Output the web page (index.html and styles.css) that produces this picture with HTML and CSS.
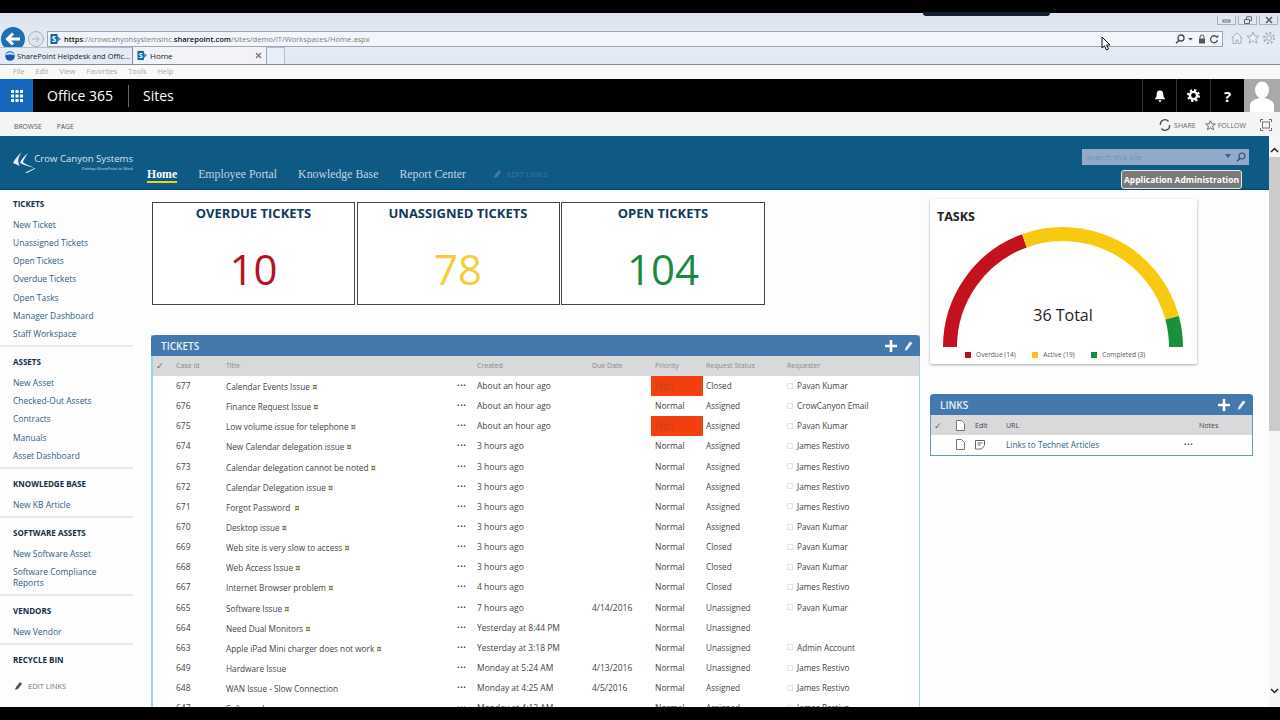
FILE: index.html
```html
<!DOCTYPE html>
<html lang="en">
<head>
<meta charset="utf-8">
<title>Home</title>
<link rel="stylesheet" href="styles.css">
</head>
<body>
<div class="app">
  <div class="blackbar"><div class="notch"></div></div>

  <div class="chrome">
    <div class="window-btns">
      <span class="win-btn"><svg width="10" height="8" viewBox="0 0 10 8"><rect x="1" y="4" width="7" height="2" fill="none" stroke="#6a7480"/></svg></span>
      <span class="win-btn"><svg width="10" height="8" viewBox="0 0 10 8"><path d="M1.5 3.5h5v4h-5zM3.5 3V.8h5v4H7" fill="none" stroke="#5a6470"/></svg></span>
      <span class="win-btn"><svg width="10" height="8" viewBox="0 0 10 8"><path d="M2 1l6 6M8 1L2 7" stroke="#5a6470" stroke-width="1.6"/></svg></span>
    </div>
    <div class="nav-row">
      <span class="back"><svg width="24" height="24" viewBox="0 0 24 24"><circle cx="12" cy="12" r="12" fill="#1f6db2"/><path d="M19 12H7M12 6.5L6.5 12l5.500 5.500" fill="none" stroke="#fff" stroke-width="3"/></svg></span>
      <span class="forward"><svg width="16" height="16" viewBox="0 0 16 16"><circle cx="8" cy="8" r="7.500" fill="#dfe5ee" stroke="#a9b2bf"/><path d="M4 8h7M8 5l3 3-3 3" fill="none" stroke="#a9b2bf"/></svg></span>
      <div class="address">
        <svg class="s-logo" width="12" height="12" viewBox="0 0 12 12"><path d="M6 2l5 4-5 4z" fill="#3f8fc4"/><rect x="0.500" y="1" width="7" height="10" fill="#0f6aa8"/><text x="1.800" y="9" class="s-letter">S</text></svg>
        <span class="url"><b>https</b>://crowcanyonsystemsinc.<b>sharepoint.com</b>/sites/demo/IT/Workspaces/Home.aspx</span>
        <span class="addr-tools">
          <svg width="10" height="10" viewBox="0 0 10 10"><circle cx="6" cy="4" r="3" fill="none" stroke="#444" stroke-width="1.300"/><path d="M4 6.200L1 9.200" stroke="#444" stroke-width="1.500"/></svg>
          <svg width="5" height="10" viewBox="0 0 5 10"><path d="M0 4h5L2.500 6.500z" fill="#555"/></svg>
          <svg class="lock" width="8" height="10" viewBox="0 0 8 10"><path d="M2 4.500V3a2 2 0 0 1 4 0v1.500" fill="none" stroke="#555"/><rect x="1" y="4.500" width="6" height="5" fill="#555"/></svg>
          <svg width="10" height="10" viewBox="0 0 10 10"><path d="M8 3.300A3.500 3.500 0 1 0 8.500 6" fill="none" stroke="#555" stroke-width="1.300"/><path d="M6.500 3.500h2.800V.8z" fill="#555"/></svg>
        </span>
      </div>
      <span class="ie-tools">
        <svg width="14" height="14" viewBox="0 0 14 14"><path d="M1.500 7L7 2l5.500 5M3 6v6.500h3V9h2v3.500h3V6" fill="#eef2f7" stroke="#a3adb9"/></svg>
        <svg width="14" height="14" viewBox="0 0 14 14"><path d="M7 1l1.800 4H13l-3.300 2.800 1.200 4.400L7 9.800l-3.900 2.400 1.200-4.400L1 5h4.200z" fill="#eef2f7" stroke="#a3adb9"/></svg>
        <svg width="14" height="14" viewBox="0 0 14 14"><circle cx="7" cy="7" r="2.500" fill="none" stroke="#a3adb9"/><circle cx="7" cy="7" r="5" fill="none" stroke="#a3adb9" stroke-width="2" stroke-dasharray="2 1.900"/></svg>
      </span>
    </div>
    <div class="tab-row">
      <div class="tab tab-inactive">
        <svg width="10" height="10" viewBox="0 0 10 10"><circle cx="5" cy="5" r="4.800" fill="#1a58a8"/><path d="M.4 4.600a4.800 4.800 0 0 1 9.200 0c-3-1.500-6-1.500-9.200 0z" fill="#cfe2f5"/></svg>
        <span>SharePoint Helpdesk and Offic...</span>
      </div>
      <div class="tab tab-active">
        <svg width="11" height="11" viewBox="0 0 12 12"><path d="M6 2l5 4-5 4z" fill="#3f8fc4"/><rect x="0.500" y="1" width="7" height="10" fill="#0f6aa8"/><text x="1.800" y="9" class="s-letter">S</text></svg>
        <span class="tab-label">Home</span>
        <svg width="7" height="7" viewBox="0 0 7 7"><path d="M1 1l5 5M6 1L1 6" stroke="#777" stroke-width="1.400"/></svg>
      </div>
      <div class="tab-new"></div>
    </div>
    <div class="menu-row"><span>File</span><span>Edit</span><span>View</span><span>Favorites</span><span>Tools</span><span>Help</span></div>
  </div>

  <div class="suite">
    <div class="waffle"><svg width="12" height="12" viewBox="0 0 12 12" fill="#fff"><rect width="3" height="3"/><rect x="4.500" width="3" height="3"/><rect x="9" width="3" height="3"/><rect y="4.500" width="3" height="3"/><rect x="4.500" y="4.500" width="3" height="3"/><rect x="9" y="4.500" width="3" height="3"/><rect y="9" width="3" height="3"/><rect x="4.500" y="9" width="3" height="3"/><rect x="9" y="9" width="3" height="3"/></svg></div>
    <span class="suite-brand">Office 365</span>
    <span class="suite-app">Sites</span>
    <div class="suite-right">
      <span class="suite-icon"><svg width="12" height="12" viewBox="0 0 12 12" fill="#fff"><path d="M6 .5c2.300 0 3.300 1.700 3.300 3.700 0 2.300.7 3.400 1.700 4.300v.8H1v-.8c1-.9 1.700-2 1.700-4.300C2.700 2.200 3.700.5 6 .5z"/><path d="M4.500 10.300h3A1.500 1.500 0 0 1 4.500 10.300z"/></svg></span>
      <span class="suite-icon"><svg width="13" height="13" viewBox="0 0 13 13"><circle cx="6.500" cy="6.500" r="3.600" fill="none" stroke="#fff" stroke-width="2.400"/><circle cx="6.500" cy="6.500" r="5.500" fill="none" stroke="#fff" stroke-width="2" stroke-dasharray="2.200 2.120"/></svg></span>
      <span class="suite-icon help">?</span>
      <div class="avatar"><svg width="36" height="33" viewBox="0 0 36 33"><rect width="36" height="33" fill="#a9a9a9"/><ellipse cx="18" cy="11" rx="7" ry="8.500" fill="#fff"/><path d="M6 33v-7c0-4 6-6 9-7h6c3 1 9 3 9 7v7z" fill="#fff"/></svg></div>
    </div>
  </div>

  <div class="ribbon">
    <span class="rib-tab">BROWSE</span>
    <span class="rib-tab">PAGE</span>
    <div class="rib-right">
      <svg width="12" height="12" viewBox="0 0 12 12"><path d="M9.500 2.500A4.500 4.500 0 0 0 1.500 6M2.500 9.500A4.500 4.500 0 0 0 10.500 6" fill="none" stroke="#555" stroke-width="1.400"/></svg>
      <span class="rib-action">SHARE</span>
      <svg class="follow-star" width="11" height="11" viewBox="0 0 12 12"><path d="M6 .8l1.500 3.500h3.800L8.300 6.700l1.100 4L6 8.500l-3.400 2.200 1.100-4L.7 4.300h3.800z" fill="none" stroke="#666"/></svg>
      <span class="rib-action">FOLLOW</span>
      <svg class="focus" width="12" height="12" viewBox="0 0 12 12"><path d="M.5 3V.5H3M9 .5h2.500V3M11.500 9v2.500H9M3 11.500H.5V9" fill="none" stroke="#666"/><rect x="2.500" y="3" width="7" height="6" fill="none" stroke="#777"/></svg>
    </div>
  </div>

  <div class="body-area">
    <div class="page">
      <header class="site-head">
        <div class="logo">
          <svg width="24" height="24" viewBox="0 0 24 24"><path d="M10 1C6 4 3 8 1 12l7 3C5 11 6 6 10 1z" fill="#e6eef5"/><path d="M16 2c-4 3-7 7-8 10 3 2 8 3 15 5l-10 4.500 2 .5 8.500-4.500C17 14 12 13 11 11c1-3 3-6 5-9z" fill="#e6eef5"/></svg>
          <div class="logo-text">
            <span class="logo-name">Crow Canyon Systems</span>
            <span class="logo-tag">Putting SharePoint to Work</span>
          </div>
        </div>
        <nav class="top-nav">
          <a class="current">Home</a>
          <a>Employee Portal</a>
          <a>Knowledge Base</a>
          <a>Report Center</a>
          <span class="nav-edit"><svg width="8" height="8" viewBox="0 0 8 8"><path d="M0 8l1-3 4-5 2 2-4 5z" fill="#4d7d9c"/></svg>EDIT LINKS</span>
        </nav>
        <div class="head-right">
          <div class="search">
            <span class="search-text">Search this site</span>
            <svg width="6" height="5" viewBox="0 0 6 5"><path d="M0 0h6L3 4z" fill="#3f5f80"/></svg>
            <svg width="10" height="10" viewBox="0 0 10 10"><circle cx="6" cy="4" r="3" fill="none" stroke="#2f4f70" stroke-width="1.200"/><path d="M4 6.200L1 9.200" stroke="#2f4f70" stroke-width="1.500"/></svg>
          </div>
          <a class="admin-btn">Application Administration</a>
        </div>
      </header>

      <main class="main">
        <aside class="sidebar">
          <section class="side-sec">
            <h3>TICKETS</h3>
            <a>New Ticket</a><a>Unassigned Tickets</a><a>Open Tickets</a><a>Overdue Tickets</a><a>Open Tasks</a><a>Manager Dashboard</a><a>Staff Workspace</a>
          </section>
          <section class="side-sec">
            <h3>ASSETS</h3>
            <a>New Asset</a><a>Checked-Out Assets</a><a>Contracts</a><a>Manuals</a><a>Asset Dashboard</a>
          </section>
          <section class="side-sec">
            <h3>KNOWLEDGE BASE</h3>
            <a>New KB Article</a>
          </section>
          <section class="side-sec">
            <h3>SOFTWARE ASSETS</h3>
            <a>New Software Asset</a><a class="two-line">Software Compliance Reports</a>
          </section>
          <section class="side-sec">
            <h3>VENDORS</h3>
            <a>New Vendor</a>
          </section>
          <section class="side-sec last">
            <h3>RECYCLE BIN</h3>
            <span class="side-edit"><svg width="8" height="8" viewBox="0 0 8 8"><path d="M0 8l1-3 4-5 2 2-4 5z" fill="#555"/></svg>EDIT LINKS</span>
          </section>
        </aside>

        <div class="center">
          <div class="kpis">
            <div class="kpi"><h2>OVERDUE TICKETS</h2><div class="kpi-num red">10</div></div>
            <div class="kpi"><h2>UNASSIGNED TICKETS</h2><div class="kpi-num yellow">78</div></div>
            <div class="kpi"><h2>OPEN TICKETS</h2><div class="kpi-num green">104</div></div>
          </div>

          <div class="panel tickets">
            <div class="panel-head"><span class="panel-title">TICKETS</span>
              <svg class="plus" width="12" height="12" viewBox="0 0 12 12"><path d="M6 0v12M0 6h12" stroke="#fff" stroke-width="2.600"/></svg>
              <svg class="pencil" width="9" height="10" viewBox="0 0 9 10"><path d="M1 10l.5-3L6 .5 8.500 2 3.500 8.500z" fill="#e6eef6"/></svg>
            </div>
            <div class="row col-head">
              <span class="tick">✓</span><span>Case Id</span><span>Title</span><span></span><span>Created</span><span>Due Date</span><span class="pri">Priority</span><span>Request Status</span><span>Requester</span>
            </div>
            <div class="row"><span></span><span>677</span><span class="title">Calendar Events Issue <i>¤</i></span><span class="dots">•••</span><span>About an hour ago</span><span></span><span class="pri high">High</span><span class="st">Closed</span><span class="req"><u></u>Pavan Kumar</span></div>
            <div class="row"><span></span><span>676</span><span class="title">Finance Request Issue <i>¤</i></span><span class="dots">•••</span><span>About an hour ago</span><span></span><span class="pri">Normal</span><span class="st">Assigned</span><span class="req"><u></u>CrowCanyon Email</span></div>
            <div class="row"><span></span><span>675</span><span class="title">Low volume issue for telephone <i>¤</i></span><span class="dots">•••</span><span>About an hour ago</span><span></span><span class="pri high">High</span><span class="st">Assigned</span><span class="req"><u></u>Pavan Kumar</span></div>
            <div class="row"><span></span><span>674</span><span class="title">New Calendar delegation issue <i>¤</i></span><span class="dots">•••</span><span>3 hours ago</span><span></span><span class="pri">Normal</span><span class="st">Assigned</span><span class="req"><u></u>James Restivo</span></div>
            <div class="row"><span></span><span>673</span><span class="title">Calendar delegation cannot be noted <i>¤</i></span><span class="dots">•••</span><span>3 hours ago</span><span></span><span class="pri">Normal</span><span class="st">Assigned</span><span class="req"><u></u>James Restivo</span></div>
            <div class="row"><span></span><span>672</span><span class="title">Calendar Delegation issue <i>¤</i></span><span class="dots">•••</span><span>3 hours ago</span><span></span><span class="pri">Normal</span><span class="st">Assigned</span><span class="req"><u></u>James Restivo</span></div>
            <div class="row"><span></span><span>671</span><span class="title">Forgot Password &nbsp;<i>¤</i></span><span class="dots">•••</span><span>3 hours ago</span><span></span><span class="pri">Normal</span><span class="st">Assigned</span><span class="req"><u></u>James Restivo</span></div>
            <div class="row"><span></span><span>670</span><span class="title">Desktop issue <i>¤</i></span><span class="dots">•••</span><span>3 hours ago</span><span></span><span class="pri">Normal</span><span class="st">Assigned</span><span class="req"><u></u>Pavan Kumar</span></div>
            <div class="row"><span></span><span>669</span><span class="title">Web site is very slow to access <i>¤</i></span><span class="dots">•••</span><span>3 hours ago</span><span></span><span class="pri">Normal</span><span class="st">Closed</span><span class="req"><u></u>Pavan Kumar</span></div>
            <div class="row"><span></span><span>668</span><span class="title">Web Access Issue <i>¤</i></span><span class="dots">•••</span><span>3 hours ago</span><span></span><span class="pri">Normal</span><span class="st">Closed</span><span class="req"><u></u>Pavan Kumar</span></div>
            <div class="row"><span></span><span>667</span><span class="title">Internet Browser problem <i>¤</i></span><span class="dots">•••</span><span>4 hours ago</span><span></span><span class="pri">Normal</span><span class="st">Closed</span><span class="req"><u></u>James Restivo</span></div>
            <div class="row"><span></span><span>665</span><span class="title">Software Issue <i>¤</i></span><span class="dots">•••</span><span>7 hours ago</span><span>4/14/2016</span><span class="pri">Normal</span><span class="st">Unassigned</span><span class="req"><u></u>Pavan Kumar</span></div>
            <div class="row"><span></span><span>664</span><span class="title">Need Dual Monitors <i>¤</i></span><span class="dots">•••</span><span>Yesterday at 8:44 PM</span><span></span><span class="pri">Normal</span><span class="st">Unassigned</span><span></span></div>
            <div class="row"><span></span><span>663</span><span class="title">Apple iPad Mini charger does not work <i>¤</i></span><span class="dots">•••</span><span>Yesterday at 3:18 PM</span><span></span><span class="pri">Normal</span><span class="st">Unassigned</span><span class="req"><u></u>Admin Account</span></div>
            <div class="row"><span></span><span>649</span><span class="title">Hardware Issue</span><span class="dots">•••</span><span>Monday at 5:24 AM</span><span>4/13/2016</span><span class="pri">Normal</span><span class="st">Unassigned</span><span class="req"><u></u>James Restivo</span></div>
            <div class="row"><span></span><span>648</span><span class="title">WAN Issue - Slow Connection</span><span class="dots">•••</span><span>Monday at 4:25 AM</span><span>4/5/2016</span><span class="pri">Normal</span><span class="st">Assigned</span><span class="req"><u></u>James Restivo</span></div>
            <div class="row"><span></span><span>647</span><span class="title">Software I</span><span class="dots">•••</span><span>Monday at 4:12 AM</span><span></span><span class="pri">Normal</span><span class="st">Assigned</span><span class="req"><u></u>James Restivo</span></div>
          </div>
        </div>

        <div class="right">
          <div class="tasks">
            <h2>TASKS</h2>
            <svg class="gauge" width="267" height="125" viewBox="0 24 267 125">
              <path d="M20 148A113 113 0 0 1 94.400 41.800" fill="none" stroke="#c4111e" stroke-width="14"/>
              <path d="M94.400 41.800A113 113 0 0 1 242.100 118.800" fill="none" stroke="#f7ca10" stroke-width="14"/>
              <path d="M242.100 118.800A113 113 0 0 1 246 148" fill="none" stroke="#17913c" stroke-width="14"/>
              <text x="133" y="122" text-anchor="middle" class="gauge-total">36 Total</text>
            </svg>
            <div class="legend">
              <span class="leg"><b class="sw-red"></b>Overdue (14)</span>
              <span class="leg"><b class="sw-yellow"></b>Active (19)</span>
              <span class="leg"><b class="sw-green"></b>Completed (3)</span>
            </div>
          </div>

          <div class="panel links">
            <div class="panel-head"><span class="panel-title">LINKS</span>
              <svg class="plus" width="12" height="12" viewBox="0 0 12 12"><path d="M6 0v12M0 6h12" stroke="#fff" stroke-width="2.600"/></svg>
              <svg class="pencil" width="9" height="10" viewBox="0 0 9 10"><path d="M1 10l.5-3L6 .5 8.500 2 3.500 8.500z" fill="#e6eef6"/></svg>
            </div>
            <div class="link-row col-head">
              <span class="tick">✓</span>
              <span><svg width="9" height="11" viewBox="0 0 9 11"><path d="M.5.500h5l3 3v7h-8z" fill="#fff" stroke="#777"/></svg></span>
              <span>Edit</span><span>URL</span><span></span><span>Notes</span>
            </div>
            <div class="link-row link-body">
              <span></span>
              <span><svg width="9" height="11" viewBox="0 0 9 11"><path d="M.5.500h5l3 3v7h-8z" fill="#fff" stroke="#777"/></svg></span>
              <span><svg width="11" height="10" viewBox="0 0 11 10"><path d="M.5.500h9v5l-3 3.500h-6z" fill="#fff" stroke="#666"/><path d="M2.500 3h5M2.500 5h3" stroke="#666"/></svg></span>
              <span class="link-name">Links to Technet Articles</span>
              <span class="dots">•••</span><span></span>
            </div>
          </div>
        </div>
      </main>
    </div>
    <div class="scrollbar">
      <svg width="9" height="6" viewBox="0 0 9 6"><path d="M1 5l3.500-3.500L8 5" fill="none" stroke="#222" stroke-width="1.500"/></svg>
      <div class="thumb"></div>
      <svg width="9" height="6" viewBox="0 0 9 6"><path d="M1 1l3.500 3.500L8 1" fill="none" stroke="#222" stroke-width="1.500"/></svg>
    </div>
  </div>

  <div class="blackbar bottom"></div>
  <svg class="cursor" width="10" height="15" viewBox="0 0 10 15"><path d="M1 1v11l2.500-2.200L5.500 14l2-1-2-4H9z" fill="#fff" stroke="#111"/></svg>
</div>
</body>
</html>
```

FILE: styles.css
```css
* { box-sizing: border-box; }
html, body { margin: 0; padding: 0; height: 720px; overflow: hidden; }
body { font-family: "Open Sans", "Noto Sans", sans-serif; font-size: 8.5px; color: #333; background: #fff; }
h2, h3 { margin: 0; }
a { color: inherit; text-decoration: none; }
svg { display: block; flex: none; }

.app { position: relative; display: flex; flex-direction: column; height: 720px; overflow: hidden; }
.blackbar { position: relative; height: 13px; background: #000; flex: none; }
.notch { position: absolute; left: 923px; top: 12px; width: 127px; height: 4px; background: #141e30; border-radius: 0 0 3px 3px; z-index: 2; }
.cursor { position: absolute; left: 1101px; top: 36px; }

/* browser chrome */
.chrome { position: relative; flex: none; height: 66px; display: flex; flex-direction: column; background: linear-gradient(#dde3ee, #e6edf6 50%, #dbe6f3); }
.window-btns { position: absolute; right: 2px; top: 3px; display: flex; gap: 2px; }
.win-btn { width: 19px; height: 9px; display: flex; align-items: center; justify-content: center; border: 1px solid #a8b2c0; border-top: 0; background: #e2e8f1; }
.nav-row { height: 34px; display: flex; align-items: flex-end; padding-left: 1px; }
.back { margin-bottom: -4px; }
.forward { margin-left: 3px; margin-bottom: 0; }
.address { margin-left: 3px; width: 1176px; height: 16px; display: flex; align-items: center; padding: 0 3px 0 2px; background: #f3f5fa; border: 1px solid #9aa7b8; }
.s-logo { margin-right: 2px; }
.s-letter { font: bold 8px "Open Sans", sans-serif; fill: #fff; }
.url { font-size: 7.550px; color: #7d7d7d; white-space: nowrap; }
.url b { color: #111; font-weight: 600; }
.addr-tools { margin-left: auto; display: flex; align-items: center; gap: 3px; }
.lock { margin-left: 2px; }
.ie-tools { display: flex; gap: 2px; margin-left: 7px; margin-bottom: 2px; }
.tab-row { height: 18px; display: flex; border-bottom: 1px solid #7f8a98; }
.tab { height: 17px; display: flex; align-items: center; white-space: nowrap; }
.tab-inactive { width: 133px; gap: 2px; padding-left: 5px; font-size: 7.550px; color: #222; background: #e4ebf4; border-top: 1px solid #b6c0cc; border-right: 1px solid #7f8a98; }
.tab-active { width: 134px; gap: 2px; padding: 0 4px; font-size: 8px; background: #f1f3f8; color: #222; border-right: 1px solid #9aa5b3; }
.tab-label { flex: 1; }
.tab-new { width: 18px; height: 17px; background: #e9eff7; border-right: 1px solid #b6c0cc; border-top: 1px solid #b6c0cc; }
.menu-row { height: 14px; display: flex; align-items: center; gap: 11px; padding: 0 0 2px 13px; background: #f8f8f6; font-size: 7.300px; color: #a8a8a8; }

/* suite bar */
.suite { flex: none; height: 33px; display: flex; align-items: center; background: #000; color: #fff; }
.waffle { width: 33px; height: 33px; display: flex; align-items: center; justify-content: center; background: #1469bd; }
.suite-brand { width: 96px; padding-left: 14px; height: 22px; line-height: 22px; font-size: 14px; border-right: 1px solid #666; }
.suite-app { padding-left: 14px; font-size: 14px; }
.suite-right { margin-left: auto; display: flex; height: 33px; align-items: center; }
.suite-icon { width: 34px; height: 33px; display: flex; align-items: center; justify-content: center; border-left: 1px solid #333; }
.help { font-size: 15px; font-weight: 700; }
.avatar { width: 36px; height: 33px; margin-left: 0; }

/* ribbon */
.ribbon { flex: none; height: 24px; display: flex; align-items: center; gap: 15px; padding: 4px 8px 0 14px; background: #f4f4f4; font-size: 6.800px; color: #555; }
.rib-right { margin-left: auto; margin-top: -4px; padding-top: 2px; display: flex; align-items: center; gap: 3px; }
.rib-action { color: #666; font-size: 7px; }
.follow-star { margin: 0 -1px 0 6px; }
.focus { margin-left: 11px; }

/* body */
.body-area { flex: 1; min-height: 0; display: flex; }
.page { flex: 1; min-width: 0; display: flex; flex-direction: column; }
.scrollbar { flex: none; width: 11px; display: flex; flex-direction: column; align-items: center; padding: 11px 0 13px; background: #f6f6f6; }
.thumb { width: 11px; height: 274px; margin-top: 4px; margin-bottom: auto; background: #cbcbcb; }

.site-head { flex: none; height: 54px; display: flex; background: #0f5a84; border-bottom: 1px solid #0b4463; position: relative; }
.logo { width: 147px; padding: 15px 0 0 12px; display: flex; color: #dfe9f2; }
.logo-text { margin-left: -2px; display: flex; flex-direction: column; align-items: flex-end; width: 99px; padding-top: 1px; }
.logo-name { font-size: 9.600px; line-height: 13px; white-space: nowrap; color: #d9e4ee; }
.logo-tag { font-family: "DejaVu Serif", serif; font-style: italic; font-size: 3.700px; line-height: 8px; white-space: nowrap; color: #cfdce7; }
.top-nav { display: flex; gap: 21px; padding-top: 30px; font-family: "Liberation Serif", serif; font-size: 11.800px; line-height: 16px; color: #c3d3e2; }
.top-nav a { height: 17px; white-space: nowrap; }
.top-nav .current { color: #fff; font-weight: 700; border-bottom: 2px solid #e6d422; }
.nav-edit { margin-left: 7px; display: flex; align-items: center; gap: 5px; height: 16px; font-family: "Open Sans", sans-serif; font-size: 8px; color: #3f7596; }
.head-right { margin-left: auto; width: 187px; padding-top: 13px; padding-left: 0; display: flex; flex-direction: column; }
.search { width: 167px; height: 16px; display: flex; align-items: center; gap: 5px; padding: 0 3px 0 4px; background: #93a9c9; }
.search-text { flex: 1; font-size: 8px; color: #7890ad; }
.admin-btn { align-self: flex-start; margin: 5px 0 0 39px; width: 121px; height: 20px; line-height: 17px; text-align: center; font-size: 8.500px; font-weight: 700; color: #fff; background: #7a7a7a; border: 1px solid #e8e8e8; border-radius: 3px; white-space: nowrap; }

.main { flex: 1; min-height: 0; display: flex; overflow: hidden; background: #fdfdfe; }

/* sidebar */
.sidebar { flex: none; width: 133px; margin-top: -1px; }
.side-sec { padding: 9px 0 2px 13px; border-bottom: 2px solid #e8e9ea; }
.side-sec.last { border-bottom: 0; }
.side-sec h3 { font-size: 8px; line-height: 12px; font-weight: 700; color: #123048; margin-bottom: 6px; white-space: nowrap; }
.side-sec a { display: block; font-size: 8.450px; line-height: 18.150px; color: #2f5d82; white-space: nowrap; }
.side-sec a.two-line { white-space: normal; line-height: 10.800px; padding: 4px 0 3.400px; width: 100px; }
.side-edit { margin: 14px 0 0 2px; display: flex; align-items: center; gap: 5px; font-size: 7.500px; line-height: 12px; color: #777; }

/* center */
.center { flex: none; width: 769px; margin-left: 18px; padding-top: 12px; }
.kpis { display: flex; gap: 1.500px; margin-left: 1px; }
.kpi { width: 203px; height: 103px; border: 1px solid #444; background: #fff; text-align: center; }
.kpi:last-child { width: 204px; }
.kpi h2 { font-size: 13px; line-height: 18px; padding-top: 1px; font-weight: 700; color: #12395c; white-space: nowrap; }
.kpi-num { margin-top: 17px; font-size: 42px; line-height: 60px; font-weight: 400; }
.red { color: #b3121f; }
.yellow { color: #f6ce3c; }
.green { color: #1c8a3e; }

.panel { background: #fff; border-left: 2px solid #8fdcd6; border-right: 1px solid #a8d4ea; }
.tickets { margin-top: 30px; height: 400px; }
.panel-head { height: 21px; margin-left: -2px; margin-right: -1px; display: flex; align-items: center; padding: 0 7px 0 10px; background: #4579ad; border-radius: 4px 4px 0 0; color: #fff; }
.panel-title { flex: 1; font-size: 10px; font-weight: 600; color: #e8f1f8; }
.plus { margin-right: 7px; }

.row { height: 20.150px; display: grid; grid-template-columns: 23px 50px 231px 20px 115px 59px 55px 81px 1fr; align-items: center; color: #444; white-space: nowrap; font-size: 8.500px; }
.row.col-head { height: 19.500px; }
.col-head { height: 20px; background: #d9d9db; color: #8a8a8a; font-size: 7px; }
.tick { padding-left: 3px; color: #666; font-size: 9px; }
.title { padding-top: 2px; font-size: 8.250px; }
.title i { font-family: "DejaVu Sans", sans-serif; font-style: normal; font-weight: 700; font-size: 8px; color: #6f7a35; }
.dots { font-size: 6.500px; letter-spacing: .7px; color: #333; }
.st { font-size: 8.200px; }
.pri { padding-left: 4px; }
.high { height: 20.150px; line-height: 20.150px; margin-right: 3px; background: #f23f10; color: #b84a20; }
.req { display: flex; align-items: center; font-size: 8.200px; }
.req u { width: 6px; height: 6px; margin-right: 4px; border: 1px solid #e4e4e4; }

/* right column */
.right { flex: none; margin-left: 10px; }
.tasks { width: 267px; height: 165px; margin-top: 9px; padding-top: 11px; background: #fff; border-radius: 2px; box-shadow: 0 1px 3px rgba(0,0,0,.35); }
.tasks h2 { padding-left: 7px; font-size: 12.500px; line-height: 13px; font-weight: 700; color: #222; }
.gauge-total { font-family: "Open Sans", sans-serif; font-size: 16px; fill: #222; }
.legend { display: flex; padding: 1px 0 0 35px; font-size: 6.600px; line-height: 12px; color: #555; }
.leg { display: flex; align-items: center; gap: 5px; margin-right: 16.500px; white-space: nowrap; }
.leg b { width: 6px; height: 6px; }
.sw-red { background: #b3121f; }
.sw-yellow { background: #f4ca16; }
.sw-green { background: #1c8a3e; }
.links { margin-top: 30px; width: 323px; border: 1px solid #5f9fb4; border-top: 0; border-radius: 4px 4px 0 0; }
.links .panel-head { margin-left: -1px; margin-right: -1px; }
.link-row { height: 20px; display: grid; grid-template-columns: 25px 19px 31px 178px 15px 1fr; align-items: center; color: #444; font-size: 8.500px; white-space: nowrap; }
.links .col-head { font-size: 7px; }
.link-body { padding-bottom: 1px; }
.link-name { color: #2d6088; font-size: 8.250px; }
```
